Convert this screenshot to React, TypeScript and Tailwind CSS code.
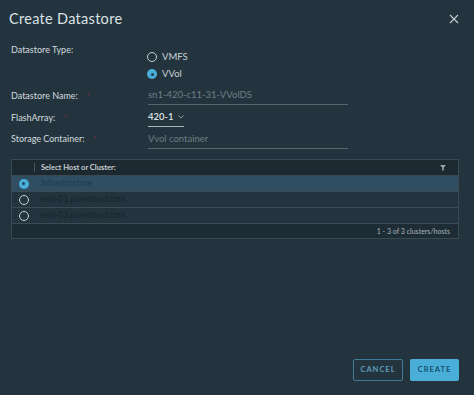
import React from "react";

function Radio({ checked }: { checked?: boolean }) {
  if (checked) {
    return (
      <span className="flex h-[10px] w-[10px] items-center justify-center rounded-full bg-[#49afd9]">
        <span className="h-[3px] w-[3px] rounded-full bg-[#1d3f55]" />
      </span>
    );
  }
  return <span className="h-[10px] w-[10px] rounded-full border-[1.5px] border-[#c9d2d6]" />;
}

function Req() {
  return <span className="ml-[9px] text-[7px] text-[#7a3434]">*</span>;
}

export default function App() {
  return (
    <div
      className="flex h-[395px] w-[474px] flex-col bg-[#23343e] text-[#d3dbdf]"
      style={{ fontFamily: "Lato, 'Open Sans', sans-serif" }}
    >
      {/* Title */}
      <div className="flex h-[37px] items-center justify-between pl-[9px] pr-[15px]">
        <div className="text-[14.5px] tracking-[0.3px] text-[#dbe2e6]">Create Datastore</div>
        <svg width="10" height="10" viewBox="0 0 10 10" className="text-[#c4ccd0]">
          <path d="M1 1 L9 9 M9 1 L1 9" stroke="currentColor" strokeWidth="1.1" />
        </svg>
      </div>

      {/* Form */}
      <div className="flex flex-col pl-[11px] text-[9.5px]">
        <div className="flex h-[49px]">
          <div className="w-[136px] pt-[6px] text-[9px] text-[#d3dbdf]">Datastore Type:</div>
          <div className="flex flex-col gap-[5px] pt-[14px]">
            <div className="flex h-[12px] items-center gap-[5px]">
              <Radio />
              <span className="text-[#c7d0d4]">VMFS</span>
            </div>
            <div className="flex h-[12px] items-center gap-[5px]">
              <Radio checked />
              <span className="text-[#c7d0d4]">VVol</span>
            </div>
          </div>
        </div>
        <div className="flex h-[19px] items-center">
          <div className="w-[136px] text-[9px]">
            Datastore Name:
            <Req />
          </div>
          <div className="ml-[1px] flex h-[19px] w-[200px] items-center border-b border-[#56646b] pt-[1px] text-[#6f7d84]">
            sn1-420-c11-31-VVolDS
          </div>
        </div>
        <div className="flex h-[22px] items-center pt-[3px]">
          <div className="w-[136px] text-[9px]">
            FlashArray:
            <Req />
          </div>
          <div className="ml-[1px] flex h-[19px] w-[36px] items-center gap-[4px] border-b border-[#aab4b9] text-[#dde4e7]">
            <span className="font-semibold">420-1</span>
            <svg width="6" height="4" viewBox="0 0 6 4">
              <path d="M0.5 0.5 L3 3 L5.5 0.5" stroke="#9aa5ab" strokeWidth="0.9" fill="none" />
            </svg>
          </div>
        </div>
        <div className="flex h-[22px] items-center pt-[2px]">
          <div className="w-[136px] text-[9px]">
            Storage Container:
            <Req />
          </div>
          <div className="ml-[1px] flex h-[19px] w-[200px] items-center border-b border-[#56646b] pt-[1px] text-[#6f7d84]">
            Vvol container
          </div>
        </div>
      </div>

      {/* Table */}
      <div className="ml-[11px] mt-[10px] w-[448px] border border-[#3a4a53] bg-[#22323c]">
        <div className="flex h-[16px] items-center border-b border-[#3a4a53] bg-[#1c2931]">
          <div className="flex h-full w-[23px] items-center justify-end">
            <div className="h-[9px] w-px bg-[#45545d]" />
          </div>
          <div className="flex-1 pl-[6px] text-[7.5px] font-bold text-[#c6cfd3]">Select Host or Cluster:</div>
          <svg width="6" height="6" viewBox="0 0 6 6" className="mr-[12px]">
            <path d="M0 0 H6 L3.8 2.6 V5.5 H2.2 V2.6 Z" fill="#9aa5ab" />
          </svg>
        </div>
        {[
          { name: "Infrastructure", sel: true },
          { name: "esxi-01.purecloud.com", sel: false },
          { name: "esxi-03.purecloud.com", sel: false },
        ].map((r) => (
          <div
            key={r.name}
            className={`flex h-[16px] items-center border-b border-[#3a4c56] text-[8.5px] ${
              r.sel ? "bg-[#2f4e62] text-[#173c56]" : "bg-[#24343e] text-[#16242d]"
            }`}
          >
            <div className="flex w-[23px] justify-center">
              <Radio checked={r.sel} />
            </div>
            <div className="pl-[6px]">{r.name}</div>
          </div>
        ))}
        <div className="flex h-[14px] items-center justify-end bg-[#1e2c35] pr-[8px] text-[7px] text-[#aab4b9]">
          1 - 3 of 3 clusters/hosts
        </div>
      </div>

      <div className="flex-1" />

      {/* Buttons */}
      <div className="flex justify-end gap-[7px] pb-[14px] pr-[15px]">
        <button className="flex h-[22px] w-[50px] items-center justify-center rounded-[2px] border border-[#3f7c99] text-[7.5px] font-bold tracking-[1px] text-[#5f9cba]">
          CANCEL
        </button>
        <button className="flex h-[22px] w-[49px] items-center justify-center rounded-[2px] bg-[#49afd9] text-[7.5px] font-bold tracking-[1px] text-[#17506d]">
          CREATE
        </button>
      </div>
    </div>
  );
}
